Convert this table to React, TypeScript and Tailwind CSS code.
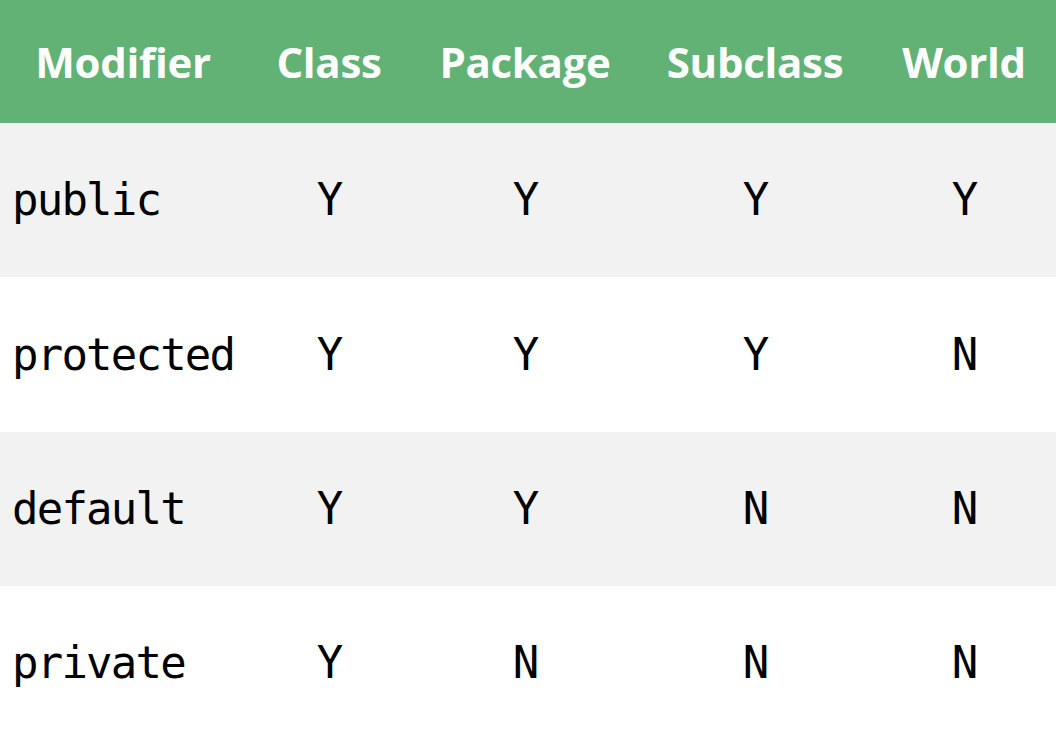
const columns = ["Modifier", "Class", "Package", "Subclass", "World"];

const rows: { name: string; access: string[] }[] = [
  { name: "public", access: ["Y", "Y", "Y", "Y"] },
  { name: "protected", access: ["Y", "Y", "Y", "N"] },
  { name: "default", access: ["Y", "Y", "N", "N"] },
  { name: "private", access: ["Y", "N", "N", "N"] },
];

const grid = "grid grid-cols-[246px_166px_226px_234px_184px]";
const rowHeights = ["h-[154px]", "h-[155px]", "h-[154px]", "h-[154px]"];

export default function App() {
  return (
    <div className="h-[738px] w-[1056px] overflow-hidden bg-white">
      <div className={`${grid} h-[123px] items-center bg-[#62b276]`}>
        {columns.map((col) => (
          <div
            key={col}
            className="text-center font-['Open_Sans',sans-serif] text-[42px] font-bold tracking-[-0.3px] text-white"
          >
            {col}
          </div>
        ))}
      </div>
      {rows.map((row, i) => (
        <div
          key={row.name}
          className={`${grid} ${rowHeights[i]} items-center ${i % 2 === 0 ? "bg-[#f2f2f2]" : "bg-white"} font-['DejaVu_Sans_Mono',monospace] text-[44px] tracking-[-1.8px] text-black`}
        >
          <div className="pl-[12px]">{row.name}</div>
          {row.access.map((v, j) => (
            <div key={j} className="text-center">
              {v}
            </div>
          ))}
        </div>
      ))}
    </div>
  );
}
